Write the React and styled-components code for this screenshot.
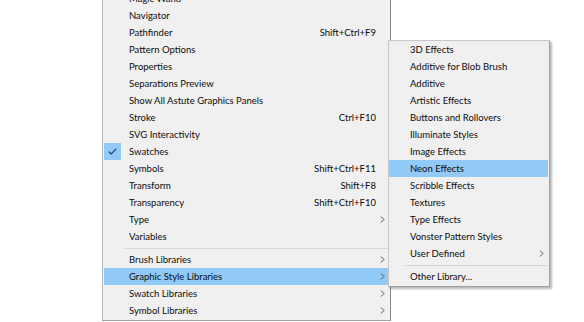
import React from "react";
import styled, { createGlobalStyle } from "styled-components";

const GlobalStyle = createGlobalStyle`
  html, body {
    margin: 0;
    padding: 0;
    background: #ffffff;
    overflow: hidden;
  }
  body {
    font-family: Lato, "Noto Sans", sans-serif;
    font-size: 9.5px;
    color: #0c0c0c;
  }
`;

const windowItems = [
  { label: "Magic Wand" },
  { label: "Navigator" },
  { label: "Pathfinder", shortcut: "Shift+Ctrl+F9" },
  { label: "Pattern Options" },
  { label: "Properties" },
  { label: "Separations Preview" },
  { label: "Show All Astute Graphics Panels" },
  { label: "Stroke", shortcut: "Ctrl+F10" },
  { label: "SVG Interactivity" },
  { label: "Swatches", checked: true },
  { label: "Symbols", shortcut: "Shift+Ctrl+F11" },
  { label: "Transform", shortcut: "Shift+F8" },
  { label: "Transparency", shortcut: "Shift+Ctrl+F10" },
  { label: "Type", sub: true },
  { label: "Variables" },
  { separator: true },
  { label: "Brush Libraries", sub: true },
  { label: "Graphic Style Libraries", sub: true, active: true },
  { label: "Swatch Libraries", sub: true },
  { label: "Symbol Libraries", sub: true },
];

const styleItems = [
  { label: "3D Effects" },
  { label: "Additive for Blob Brush" },
  { label: "Additive" },
  { label: "Artistic Effects" },
  { label: "Buttons and Rollovers" },
  { label: "Illuminate Styles" },
  { label: "Image Effects" },
  { label: "Neon Effects", active: true },
  { label: "Scribble Effects" },
  { label: "Textures" },
  { label: "Type Effects" },
  { label: "Vonster Pattern Styles" },
  { label: "User Defined", sub: true },
  { separator: true },
  { label: "Other Library..." },
];

const Arrow = () => (
  <svg width="5" height="7" viewBox="0 0 5 7">
    <polyline points="1,0.5 4,3.5 1,6.5" fill="none" stroke="#555" strokeWidth="1" />
  </svg>
);

const Check = () => (
  <svg width="9" height="7" viewBox="0 0 9 7">
    <polyline points="0.8,3.6 3.2,6 8.2,0.8" fill="none" stroke="#1f3f66" strokeWidth="1.2" />
  </svg>
);

const App = () => {
  return (
    <>
      <GlobalStyle />
      <Page>
        <MainMenu>
          {windowItems.map((item, i) =>
            item.separator ? (
              <Separator key={i} $indent={21} />
            ) : (
              <MainRow key={i} $active={item.active}>
                <CheckCell>{item.checked && <CheckBox><Check /></CheckBox>}</CheckCell>
                <Label>{item.label}</Label>
                <Shortcut>{item.shortcut}</Shortcut>
                <ArrowCell>{item.sub && <Arrow />}</ArrowCell>
              </MainRow>
            )
          )}
        </MainMenu>
        <SubMenu>
          {styleItems.map((item, i) =>
            item.separator ? (
              <Separator key={i} $indent={16} />
            ) : (
              <SubRow key={i} $active={item.active}>
                <Label>{item.label}</Label>
                <ArrowCell>{item.sub && <Arrow />}</ArrowCell>
              </SubRow>
            )
          )}
        </SubMenu>
      </Page>
    </>
  );
};
export default App;

const Page = styled.div`
  position: relative;
  width: 584px;
  height: 322px;
  overflow: hidden;
`;

const MainMenu = styled.div`
  margin-left: 102px;
  margin-top: -10px;
  width: 285px;
  padding: 0 1px 1px 1px;
  background: #f0f0f0;
  border: 1px solid #b9b9b9;
  border-right-color: #8a8a8a;
  border-bottom-color: #a0a0a0;
  border-top: none;
`;

const MainRow = styled.div`
  display: grid;
  grid-template-columns: 25px 1fr auto 13px;
  align-items: center;
  height: 17px;
  background: ${(p) => (p.$active ? "#91c9f7" : "transparent")};
`;

const CheckCell = styled.div`
  display: flex;
  align-items: center;
  height: 17px;
`;

const CheckBox = styled.div`
  width: 17px;
  height: 17px;
  background: #91c9f7;
  display: flex;
  align-items: center;
  justify-content: center;
`;

const Label = styled.span`
  white-space: nowrap;
  line-height: 16px;
  padding-top: 1px;
`;

const Shortcut = styled.span`
  white-space: nowrap;
  text-align: right;
  line-height: 16px;
  padding-top: 1px;
`;

const ArrowCell = styled.div`
  display: flex;
  align-items: center;
  justify-content: center;
  height: 17px;
`;

const Separator = styled.div`
  height: 6px;
  display: flex;
  align-items: center;
  padding-left: ${(p) => p.$indent}px;
  &::after {
    content: "";
    flex: 1;
    height: 1px;
    background: #d5d5d5;
  }
`;

const SubMenu = styled.div`
  position: absolute;
  left: 388px;
  top: 40px;
  width: 159px;
  padding: 0 1px 1px 0;
  background: #f0f0f0;
  border: 1px solid #a0a0a0;
  border-top-color: #c8c8c8;
  border-left-color: #c8c8c8;
  box-shadow: 2px 2px 2px rgba(0, 0, 0, 0.28);
`;

const SubRow = styled.div`
  display: grid;
  grid-template-columns: 1fr 14px;
  align-items: center;
  height: 17px;
  padding-left: 21px;
  background: ${(p) => (p.$active ? "#91c9f7" : "transparent")};
`;
